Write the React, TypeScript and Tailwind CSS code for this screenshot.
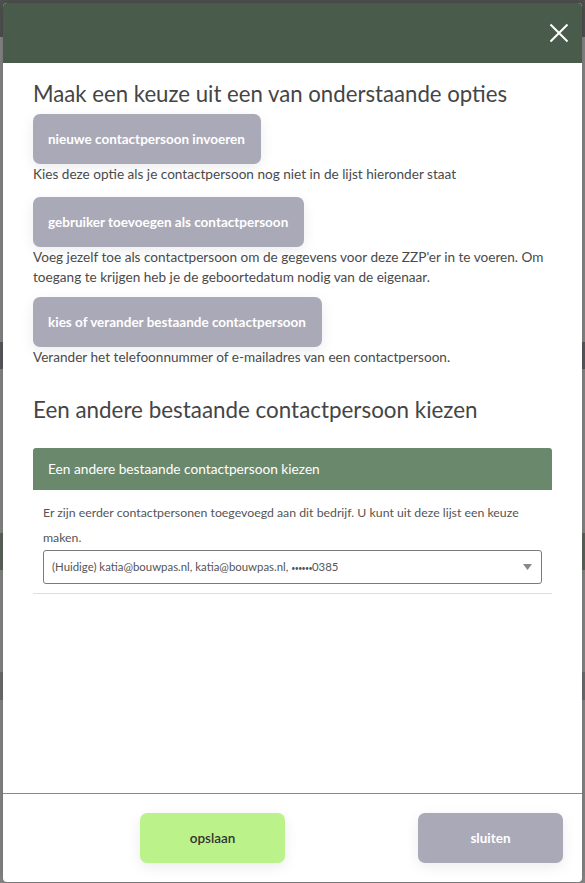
const font = { fontFamily: "Lato, 'Noto Sans', sans-serif" };

function OptionButton({ label, className = "" }: { label: string; className?: string }) {
  return (
    <button
      type="button"
      className={`h-[50px] self-start rounded-[7px] bg-[#aaa9b8] pl-[15px] pr-[16px] text-[13.5px] font-bold text-white shadow-[0_4px_14px_rgba(0,0,0,0.08)] ${className}`}
    >
      {label}
    </button>
  );
}

function CloseIcon() {
  return (
    <svg width="20" height="20" viewBox="0 0 20 20" fill="none" stroke="white" strokeWidth="2">
      <path d="M1.5 1.5 L18.5 18.5 M18.5 1.5 L1.5 18.5" />
    </svg>
  );
}

function Backdrop() {
  return (
    <div className="absolute inset-0 flex flex-col bg-[#898989]">
      <div className="h-[37px] bg-[#505250]" />
      <div className="h-[305px]" />
      <div className="h-[27px] bg-[#5b5a5f]" />
      <div className="h-[164px]" />
      <div className="h-[37px] bg-[#5d675d]" />
      <div className="h-[102px]" />
      <div className="h-[28px] bg-[#6f6f72]" />
    </div>
  );
}

export default function App() {
  return (
    <div className="relative h-[883px] w-full overflow-hidden" style={font}>
      <Backdrop />
      <div className="absolute left-[3px] right-[3px] top-[3px] bottom-[1px] flex flex-col overflow-hidden rounded-[4px] bg-white shadow-[0_0_12px_rgba(0,0,0,0.25)]">
        <div className="flex h-[60px] shrink-0 items-center justify-end bg-[#495b4a] pr-[8px]">
          <button type="button" className="flex h-[30px] w-[30px] items-center justify-center">
            <CloseIcon />
          </button>
        </div>

        <div className="flex flex-1 flex-col px-[30px] pt-[18px]">
          <h1 className="text-[22.2px] leading-[26px] text-[#454545]">
            Maak een keuze uit een van onderstaande opties
          </h1>

          <OptionButton label="nieuwe contactpersoon invoeren" className="mt-[7px]" />
          <p className="text-[13.6px] leading-[20px] text-[#4a4a4a]">
            Kies deze optie als je contactpersoon nog niet in de lijst hieronder staat
          </p>

          <OptionButton label="gebruiker toevoegen als contactpersoon" className="mt-[13px]" />
          <p className="pr-[8px] text-[13.6px] leading-[20px] text-[#4a4a4a]">
            Voeg jezelf toe als contactpersoon om de gegevens voor deze ZZP'er in te voeren. Om
            toegang te krijgen heb je de geboortedatum nodig van de eigenaar.
          </p>

          <OptionButton label="kies of verander bestaande contactpersoon" className="mt-[10px]" />
          <p className="text-[13.6px] leading-[20px] text-[#4a4a4a]">
            Verander het telefoonnummer of e-mailadres van een contactpersoon.
          </p>

          <h2 className="mt-[30px] text-[22.4px] leading-[26px] text-[#454545]">
            Een andere bestaande contactpersoon kiezen
          </h2>

          <div className="mt-[25px] border-b border-[#dedede]">
            <div className="flex h-[42px] items-center rounded-t-[3px] bg-[#6a886c] pl-[15px] text-[13.7px] text-white">
              Een andere bestaande contactpersoon kiezen
            </div>
            <div className="px-[10px] pt-[10px] pb-[9px]">
              <p className="text-[12.3px] leading-[25px] text-[#555]">
                Er zijn eerder contactpersonen toegevoegd aan dit bedrijf. U kunt uit deze lijst een keuze
                maken.
              </p>
              <div className="flex h-[34px] items-center justify-between rounded-[3px] border border-[#7a7a7a] pl-[8px] pr-[9px]">
                <span className="text-[11.4px] text-[#555]">
                  (Huidige) katia@bouwpas.nl, katia@bouwpas.nl,{" "}
                  <span className="text-[7px] tracking-[-0.6px]">••••••</span>0385
                </span>
                <svg width="9" height="6" viewBox="0 0 9 6">
                  <path d="M0 0 H9 L4.5 6 Z" fill="#888" />
                </svg>
              </div>
            </div>
          </div>
        </div>

        <div className="flex shrink-0 justify-end gap-[133px] border-t border-[#8a8a8a] pt-[19px] pb-[19px] pr-[19px]">
          <button
            type="button"
            className="h-[50px] w-[145px] rounded-[7px] bg-[#bbf28a] text-[13.5px] font-semibold text-[#333] shadow-[0_4px_14px_rgba(0,0,0,0.08)]"
          >
            opslaan
          </button>
          <button
            type="button"
            className="h-[50px] w-[145px] rounded-[7px] bg-[#aaa9b8] text-[13.5px] font-bold text-white shadow-[0_4px_14px_rgba(0,0,0,0.08)]"
          >
            sluiten
          </button>
        </div>
      </div>
    </div>
  );
}
